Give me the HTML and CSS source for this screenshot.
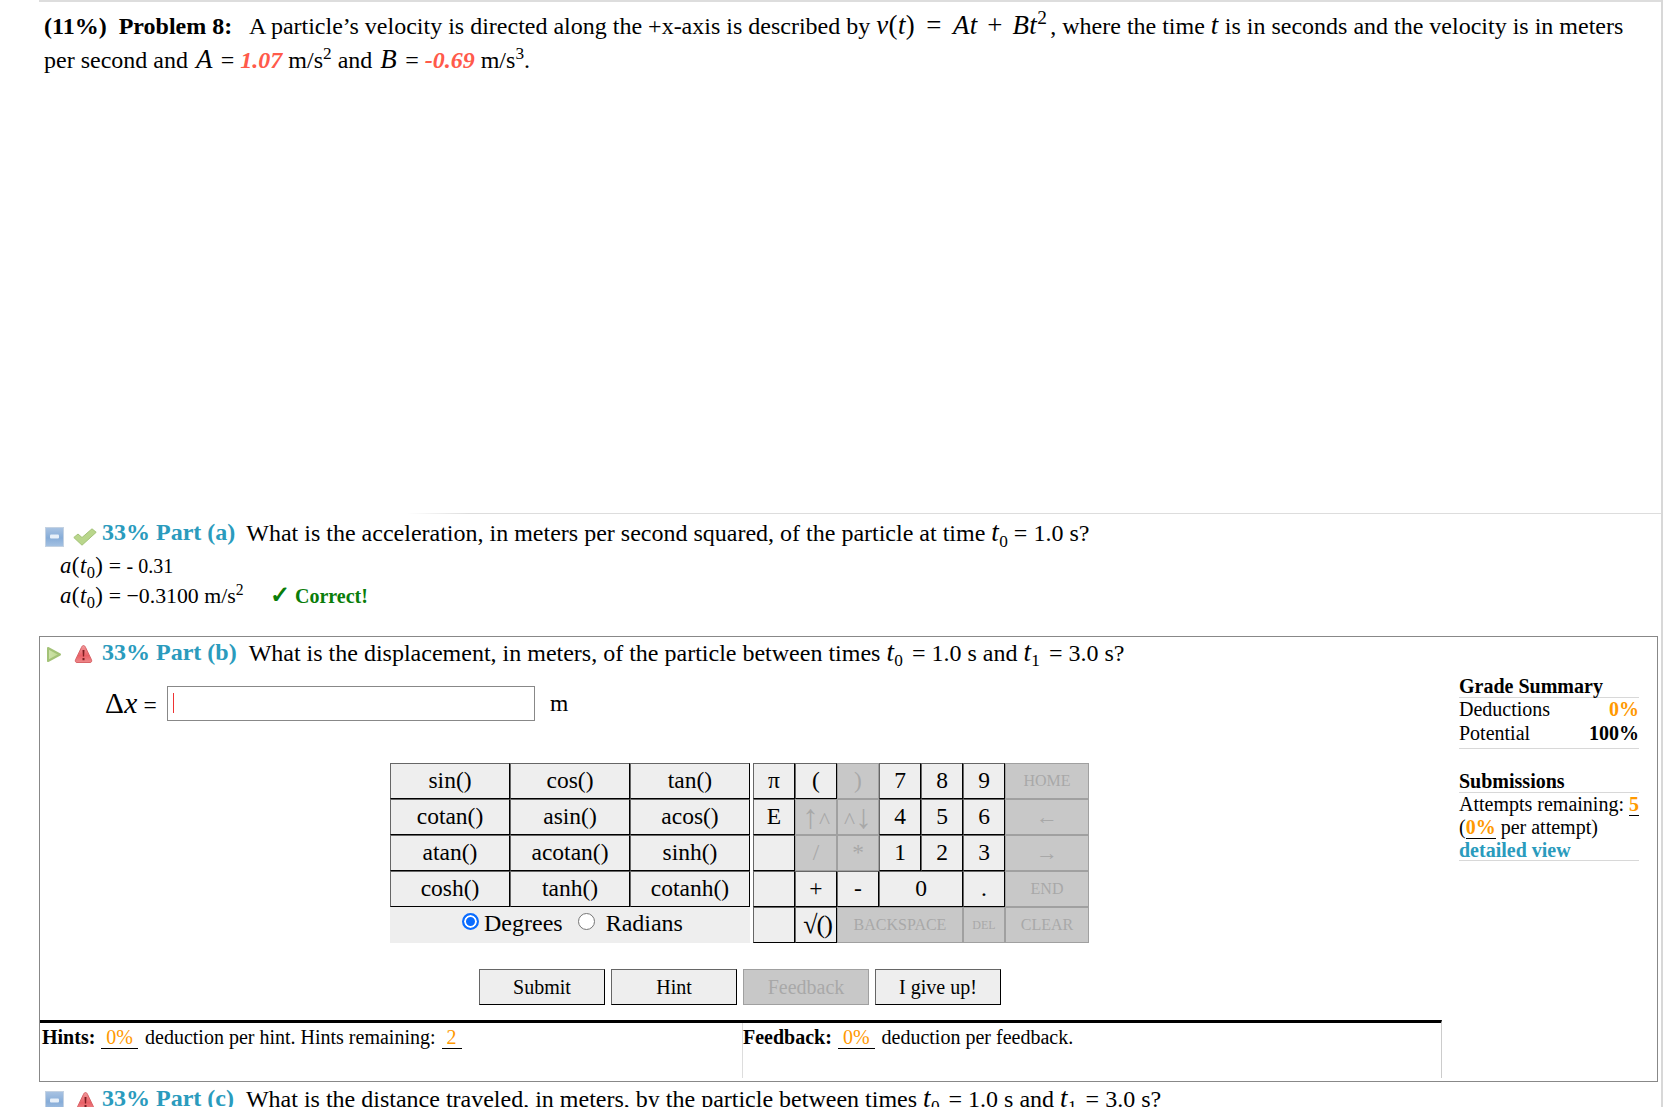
FILE: index.html
```html
<!DOCTYPE html>
<html lang="en">
<head>
<meta charset="utf-8">
<title>Problem 8</title>
<link rel="stylesheet" href="styles.css">
</head>
<body>
<svg class="defs" width="0" height="0" aria-hidden="true">
  <defs>
    <linearGradient id="gBlue" x1="0" y1="0" x2="0" y2="1"><stop offset="0" stop-color="#a9c3e2"/><stop offset=".55" stop-color="#86acd8"/><stop offset="1" stop-color="#a5c2e2"/></linearGradient>
    <linearGradient id="gRed" x1="0" y1="0" x2="0" y2="1"><stop offset="0" stop-color="#f19a9c"/><stop offset=".6" stop-color="#ea5f66"/><stop offset="1" stop-color="#ee8a8c"/></linearGradient>
    <linearGradient id="gGreen" x1="0" y1="0" x2="1" y2="0"><stop offset="0" stop-color="#cfe3ab"/><stop offset="1" stop-color="#bcd88c"/></linearGradient>
    <symbol id="minus" viewBox="0 0 19 20"><rect x="0.5" y="0.5" width="18" height="19" fill="url(#gBlue)" stroke="#c4d2e2"/><rect x="5" y="7.500" width="9" height="4" rx="1" fill="#e8f0f9"/></symbol>
    <symbol id="warn" viewBox="0 0 19 20"><path d="M9.500 1.500c1 0 1.500.8 2 1.800l6 12.500c.6 1.500 0 2.700-1.500 2.700H3c-1.500 0-2.100-1.200-1.500-2.700l6-12.500c.5-1 1-1.800 2-1.800z" fill="url(#gRed)" stroke="#d86468"/><path d="M8.500 6h2l-.4 6.500H8.900z" fill="#7d1c20"/><rect x="8.500" y="14" width="2" height="2.200" fill="#7d1c20"/></symbol>
  </defs>
</svg>
<div class="page">
  <section class="problem">
    <p class="statement"><b>(11%)&nbsp; Problem 8:</b>&nbsp;&nbsp; A particle’s velocity is directed along the +x-axis is described by <span class="math"><i>v</i>(<i>t</i>) <span class="meq">=</span> <i>At</i> <span class="mplus">+</span> <i>Bt</i><sup>2</sup></span><span class="comma">,</span> where the time <span class="math"><i>t</i></span> is in seconds and the velocity is in meters per second and <span class="math cap"><i>A</i></span> = <b class="rnd">1.07</b> m/s<sup>2</sup> and <span class="math cap"><i>B</i></span> = <b class="rnd">-0.69</b> m/s<sup>3</sup>.</p>
  </section>
  <div class="divider"></div>

  <section class="part-a">
    <h2 class="part-head">
      <svg class="ico"><use href="#minus"/></svg>
      <svg class="ico-check" viewBox="0 0 24 18"><path d="M0.800 9.500L5 6l4 3.500L19 .8l4.200 3.500L9 17.200z" fill="#b9d68c" stroke="#a3c277"/></svg>
      <span class="pct">33% Part (a)</span>
      <span class="q">What is the acceleration, in meters per second squared, of the particle at time <span class="math"><i>t</i></span><sub>0</sub> = 1.0 s?</span>
    </h2>
    <p class="ans first"><span class="math"><i>a</i>(<i>t</i><sub>0</sub>)</span> = <span class="raw">- 0.31</span></p>
    <p class="ans"><span class="math"><i>a</i>(<i>t</i><sub>0</sub>)</span> = −0.3100 m/s<sup>2</sup> <span class="correct"><span class="tick">✓</span> Correct!</span></p>
  </section>

  <section class="part-b">
    <h2 class="part-head">
      <svg class="ico-play" viewBox="0 0 16 17"><path d="M2 2l12 6.500-12 6.500z" fill="url(#gGreen)" stroke="#a3c277" stroke-width="2" stroke-linejoin="round"/></svg>
      <svg class="ico-warn"><use href="#warn"/></svg>
      <span class="pct alt">33% Part (b)</span>
      <span class="q">What is the displacement, in meters, of the particle between times <span class="math"><i>t</i></span><sub>0</sub> = 1.0 s and <span class="math"><i>t</i></span><sub>1</sub> = 3.0 s?</span>
    </h2>
    <div class="work">
      <div class="main">
        <div class="entry">
          <span class="lbl"><span class="math">Δ<i>x</i></span> =</span>
          <div class="input"><span class="caret"></span></div>
          <span class="unit">m</span>
        </div>
        <div class="calc">
          <div class="funcs">
            <button>sin()</button><button>cos()</button><button>tan()</button>
            <button>cotan()</button><button>asin()</button><button>acos()</button>
            <button>atan()</button><button>acotan()</button><button>sinh()</button>
            <button>cosh()</button><button>tanh()</button><button>cotanh()</button>
            <div class="mode">
              <span class="radio on"></span><span>Degrees</span>
              <span class="radio"></span><span>Radians</span>
            </div>
          </div>
          <div class="keys">
            <button>π</button><button>(</button><button class="off">)</button><button>7</button><button>8</button><button>9</button><button class="off sm">HOME</button>
            <button>E</button><button class="off"><span class="arr">↑</span>^</button><button class="off">^<span class="arr">↓</span></button><button>4</button><button>5</button><button>6</button><button class="off sm"><span class="harr">←</span></button>
            <button></button><button class="off">/</button><button class="off">*</button><button>1</button><button>2</button><button>3</button><button class="off sm"><span class="harr">→</span></button>
            <button></button><button>+</button><button>-</button><button class="s2">0</button><button>.</button><button class="off sm">END</button>
            <button></button><button class="root">√()</button><button class="off s3 sm">BACKSPACE</button><button class="off xs">DEL</button><button class="off sm">CLEAR</button>
          </div>
        </div>
        <div class="actions">
          <button>Submit</button><button>Hint</button><button class="off">Feedback</button><button>I give up!</button>
        </div>
        <div class="info">
          <div class="hints"><b>Hints:</b> <span class="uv">0%</span> deduction per hint. Hints remaining: <span class="uv">2</span></div>
          <div class="feedback"><b>Feedback:</b> <span class="uv">0%</span> deduction per feedback.</div>
        </div>
      </div>
      <aside class="side">
        <h3>Grade Summary</h3>
        <div class="row"><span>Deductions</span><b class="org">0%</b></div>
        <div class="row last"><span>Potential</span><b>100%</b></div>
        <h3 class="sub">Submissions</h3>
        <div class="att">Attempts remaining: <b class="uo">5</b><br>(<b class="uo">0%</b> per attempt)<br><b class="detail">detailed view</b></div>
      </aside>
    </div>
  </section>

  <section class="part-c">
    <h2 class="part-head">
      <svg class="ico"><use href="#minus"/></svg>
      <svg class="ico-warn"><use href="#warn"/></svg>
      <span class="pct alt">33% Part (c)</span>
      <span class="q">What is the distance traveled, in meters, by the particle between times <span class="math"><i>t</i></span><sub>0</sub> = 1.0 s and <span class="math"><i>t</i></span><sub>1</sub> = 3.0 s?</span>
    </h2>
  </section>
</div>
</body>
</html>
```
FILE: styles.css
```css
html, body { margin: 0; padding: 0; background: #fff; }
body { font-family: "Liberation Serif", "Times New Roman", serif; color: #000; height: 1107px; overflow: hidden; }
.defs { position: absolute; }
.page { width: 1663px; height: 1107px; box-sizing: border-box; border-right: 2px solid #d8d8d8; overflow: hidden; }
button { font-family: inherit; padding: 0; margin: 0; cursor: pointer; color: #000; }

.problem { height: 513px; box-sizing: border-box; margin-left: 39px; border-top: 2px solid #ddd; padding: 7px 0 0 5px; }
.divider { height: 1px; margin-left: 39px; background: linear-gradient(to right, transparent 368px, #ddd 430px); }
.statement { margin: 0; font-size: 24px; line-height: 33px; width: 1600px; }
sup, sub { font-size: 72%; line-height: 0; }
sub { vertical-align: -0.32em; }
.math { font-size: 1.12em; letter-spacing: .4px; }
.math.cap { margin: 0 2px; }
.meq { margin: 0 4px; }
.mplus { margin: 0 2.500px; }
.comma { margin: 0 0 0 3px; }
.rnd { color: #ff5a4a; font-style: italic; }

.part-head { margin: 0; font-weight: normal; font-size: 24px; display: flex; align-items: center; height: 34px; white-space: pre; }
.pct { font-weight: bold; color: #2a9bbd; margin-left: 5px; }
.part-b .pct.alt { margin-left: 9px; }
.part-c .pct.alt { margin-left: 7px; }
.q { margin-left: 12px; }
.part-a .q { margin-left: 11px; }
.part-b .q sub, .part-c .q sub { margin-right: 3px; }
.ico { width: 19px; height: 20px; margin-left: 45px; flex: none; }
.ico-check { width: 24px; height: 18px; margin-left: 9px; flex: none; }
.ico-play { width: 16px; height: 17px; margin-left: 7px; flex: none; }
.ico-warn { width: 19px; height: 20px; margin-left: 12px; flex: none; }
.part-a .ico, .part-a .ico-check { margin-top: 9px; }
.part-b .ico-play, .part-b .ico-warn { margin-top: 4px; }
.part-c .ico, .part-c .ico-warn { margin-top: 6px; }

.part-a { height: 122px; box-sizing: border-box; padding-top: 1px; }
.ans { margin: 0 0 0 60px; font-size: 21.800px; line-height: 29px; }
.ans.first { margin-top: 2px; }
.ans .math { font-size: 1.050em; }
.raw { font-size: 20px; }
.correct { color: #0a7d0a; font-weight: bold; font-size: 20px; margin-left: 21px; }
.tick { font-size: 24px; }

.part-b { margin-left: 39px; width: 1619px; height: 446px; box-sizing: border-box; border: 1px solid #888; }
.part-b .part-head { margin-left: -1px; height: 30px; }
.work { display: flex; }
.main { width: 1402px; }
.entry { display: flex; align-items: center; height: 36px; margin-top: 18px; font-size: 23.500px; }
.lbl { margin-left: 65px; width: 62px; white-space: pre; }
.lbl .math { font-size: 1.250em; }
.input { width: 368px; height: 35px; box-sizing: border-box; border: 1px solid #888; display: flex; align-items: center; padding-left: 5px; }
.caret { width: 1px; height: 20px; background: #e33; }
.unit { margin-left: 15px; }

.calc { display: flex; margin: 42px 0 0 350px; gap: 4px; }
.funcs { display: grid; grid-template-columns: repeat(3, 120px); grid-auto-rows: 36px; width: 360px; }
.funcs button, .keys button { font-size: 23.500px; background: #eee; border: 1px solid; border-color: #666 #000 #000 #666; line-height: 1; }
.mode { grid-column: 1 / 4; background: #eee; display: flex; align-items: center; justify-content: center; font-size: 24px; padding: 0 0 4px 5px; box-sizing: border-box; }
.radio { width: 17px; height: 17px; border-radius: 50%; border: 1px solid #767676; box-sizing: border-box; margin: 0 5px 4px 0; background: #fff; }
.radio.on { border: 2px solid #0a6cff; box-shadow: inset 0 0 0 2px #fff; background: #0a6cff; }
.mode span:nth-child(2) { margin-right: 15px; }
.mode .radio:nth-child(3) { margin-right: 11px; margin-left: 0; }
.keys { display: grid; grid-template-columns: repeat(6, 42px) 84px; grid-auto-rows: 36px; margin-left: -1px; }
.keys button.off, .actions button.off { background: #c8c8c8; color: #a8a8a8; border-color: #a0a0a0; }
.keys button.sm { font-size: 16px; }
.keys button.xs { font-size: 12px; }
.keys .s2 { grid-column: span 2; }
.keys .s3 { grid-column: span 3; }
.keys button.root { font-size: 26px; letter-spacing: -1px; padding-left: 3px; }
.arr { font-size: 34px; }
.harr { font-size: 22px; }

.actions { display: flex; gap: 6px; margin: 26px 0 0 439px; }
.actions button { width: 126px; height: 36px; font-size: 20px; background: #eee; border: 1px solid; border-color: #666 #000 #000 #666; }

.info { display: flex; border-top: 3px solid #000; margin-top: 15px; height: 58px; box-sizing: border-box; font-size: 20px; border-right: 1px solid #ccc; }
.hints { width: 703px; box-sizing: border-box; padding: 3px 0 0 2px; border-right: 1px solid #ddd; }
.feedback { padding: 3px 0 0 0; }
.uv { color: #f90; border-bottom: 1px solid #000; padding: 0 5px; margin: 0 2px 0 1px; }

.side { margin-left: 17px; margin-top: 8px; width: 180px; font-size: 20px; line-height: 23px; }
.side h3 { margin: 0; font-size: 20px; font-weight: bold; border-bottom: 1px solid #d8d8d8; height: 22px; }
.side .sub { margin-top: 21px; }
.row { display: flex; justify-content: space-between; line-height: 23.500px; }
.row.last { border-bottom: 1px solid #d8d8d8; padding-bottom: 3px; }
.org { color: #f90; }
.uo { color: #f90; border-bottom: 1px solid #000; }
.detail { color: #2a9bbd; }
.att { border-bottom: 1px solid #d8d8d8; height: 67px; }

.part-c { margin-top: -1px; }
```
